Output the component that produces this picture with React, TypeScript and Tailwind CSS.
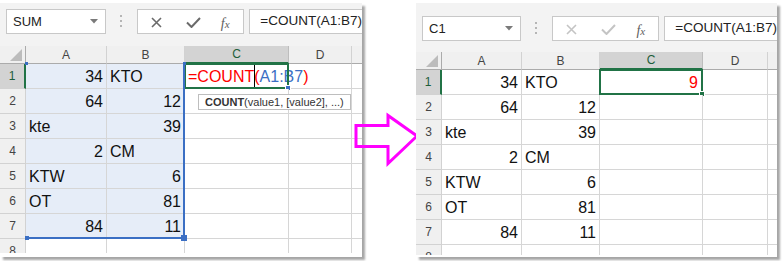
import React from "react";

type Align = "l" | "r";
type Row = [string, Align, string, Align];

const ROWS: Row[] = [
  ["34", "r", "KTO", "l"],
  ["64", "r", "12", "r"],
  ["kte", "l", "39", "r"],
  ["2", "r", "CM", "l"],
  ["KTW", "l", "6", "r"],
  ["OT", "l", "81", "r"],
  ["84", "r", "11", "r"],
];

const cellFont = { fontFamily: '"Liberation Sans", Arial, sans-serif' };

function DownTri() {
  return (
    <svg width="8" height="5" viewBox="0 0 8 5">
      <path d="M0 0h8L4 4.5z" fill="#7a7a7a" />
    </svg>
  );
}

function Dots() {
  return (
    <div className="flex w-[2px] flex-col gap-[3px] pt-[6px]">
      <span className="h-[2px] w-[2px] bg-[#b5b5b5]" />
      <span className="h-[2px] w-[2px] bg-[#b5b5b5]" />
      <span className="h-[2px] w-[2px] bg-[#b5b5b5]" />
    </div>
  );
}

function Toolbar({ name, editing, box }: { name: string; editing: boolean; box: string }) {
  const ic = editing ? "#6a6a6a" : "#c4c4c4";
  return (
    <div className={`flex items-start bg-[#f3f3f3] pl-[6px] ${box}`}>
      <div className="flex h-[25px] w-[101px] items-center justify-between border border-[#c8c8c8] bg-white pl-[6px] pr-[7px]">
        <span className="text-[13px] text-[#222]">{name}</span>
        <DownTri />
      </div>
      <div className="ml-[14px] mr-[15px]">
        <Dots />
      </div>
      <div className="relative h-[25px] w-[109px] border border-[#c8c8c8] bg-white">
        <svg className="absolute left-[13px] top-[7px]" width="11" height="11" viewBox="0 0 11 11">
          <path d="M1 1l9 9M10 1l-9 9" stroke={ic} strokeWidth="1.6" />
        </svg>
        <svg className="absolute left-[48px] top-[7px]" width="15" height="11" viewBox="0 0 15 11">
          <path d="M1 5.5l4.5 4.5L14 1" stroke={ic} strokeWidth="2" fill="none" />
        </svg>
        <span
          className="absolute left-[83px] top-[3px] text-[14px] italic text-[#5e5e5e]"
          style={{ fontFamily: '"Liberation Serif", "Times New Roman", serif' }}
        >
          f<span className="text-[11px]">x</span>
        </span>
      </div>
      <div className="ml-[5px] flex h-[25px] flex-1 items-center border border-r-0 border-[#c8c8c8] bg-white pl-[10px] text-[13.5px] text-[#222]">
        =COUNT(A1:B7)
      </div>
    </div>
  );
}

function Cell({
  text,
  align,
  w,
  sel,
}: {
  text: string;
  align: Align;
  w: string;
  sel: boolean;
}) {
  return (
    <div
      className={`flex h-[25px] shrink-0 items-end border-b border-r border-[#d6d6d6] pb-[2px] text-[16px] leading-[18px] text-[#111] ${w} ${
        align === "r" ? "justify-end pr-[3px]" : "justify-start pl-[3px]"
      } ${sel ? "bg-[#e6edf8]" : "bg-white"}`}
      style={cellFont}
    >
      {text}
    </div>
  );
}

type PanelProps = {
  name: string;
  editing: boolean;
  box: string;
  cols: string[];
  lastRow: string;
  panel: string;
};

function Panel({ name, editing, box, cols, lastRow, panel }: PanelProps) {
  const [wh, wa, wb, wc, wd, we] = cols;
  return (
    <div className={`flex flex-col bg-white ${panel}`}>
      <Toolbar name={name} editing={editing} box={box} />
      {/* column headers */}
      <div className="flex h-[18px] text-[12px] text-[#444]" style={cellFont}>
        <div className={`relative shrink-0 border-b border-r border-[#ababab] bg-[#f0f0f0] ${wh}`}>
          <svg className="absolute bottom-[2px] right-[3px]" width="12" height="12" viewBox="0 0 12 12">
            <path d="M12 0v12H0z" fill="#bcbcbc" />
          </svg>
        </div>
        <div className={`flex shrink-0 items-center justify-center border-b border-r border-b-[#ababab] border-r-[#d2d2d2] bg-[#f0f0f0] ${wa}`}>A</div>
        <div className={`flex shrink-0 items-center justify-center border-b border-r border-b-[#ababab] border-r-[#d2d2d2] bg-[#f0f0f0] ${wb}`}>B</div>
        <div className={`flex shrink-0 items-center justify-center border-b-2 border-r border-b-[#217346] border-r-[#bdbdbd] bg-[#d3d3d3] text-[#1d5e3a] ${wc}`}>C</div>
        <div className={`flex shrink-0 items-center justify-center border-b border-r border-b-[#ababab] border-r-[#d2d2d2] bg-[#f0f0f0] ${wd}`}>D</div>
        <div className={`shrink-0 border-b border-[#ababab] bg-[#f0f0f0] ${we}`} />
      </div>
      {/* rows */}
      <div className="relative">
        {ROWS.map((r, i) => (
          <div key={i} className="flex">
            <div
              className={`flex h-[25px] shrink-0 items-center justify-center border-b text-[12px] ${wh} ${
                i === 0
                  ? "border-r-2 border-b-[#d2d2d2] border-r-[#217346] bg-[#d3d3d3] text-[#1d5e3a]"
                  : "border-r border-[#d2d2d2] bg-[#f0f0f0] text-[#444]"
              }`}
              style={cellFont}
            >
              {i + 1}
            </div>
            <Cell text={r[0]} align={r[1]} w={wa} sel={editing} />
            <Cell text={r[2]} align={r[3]} w={wb} sel={editing} />
            <div
              className={`relative flex h-[25px] shrink-0 items-end border-b border-r border-[#d6d6d6] bg-white pb-[2px] text-[16px] leading-[18px] ${wc} ${
                editing ? "justify-start pl-[3px]" : "justify-end pr-[4px]"
              }`}
              style={cellFont}
            >
              {i === 0 && editing && (
                <span className="whitespace-nowrap">
                  <span className="text-[#ff0000]">=COUNT</span>
                  <span className="relative">
                    <span className="absolute left-0 top-[-4px] h-[24px] w-px bg-black" />
                  </span>
                  <span className="text-[#ff0000]">(</span>
                  <span className="text-[#3b6fc4]">A1:B7</span>
                  <span className="text-[#ff0000]">)</span>
                </span>
              )}
              {i === 0 && !editing && <span className="text-[#ff0000]">9</span>}
              {i === 0 && (
                <div className="absolute -left-px -top-px bottom-[-1px] right-[-1px] border-2 border-[#217346]">
                  <span
                    className={`absolute bottom-[-4px] right-[-4px] h-[6px] w-[6px] border border-white ${
                      editing ? "bg-[#3b6fc4]" : "bg-[#217346]"
                    }`}
                  />
                </div>
              )}
            </div>
            <div className={`h-[25px] shrink-0 border-b border-r border-[#d6d6d6] ${wd}`} />
            <div className={`h-[25px] shrink-0 border-b border-[#d6d6d6] ${we}`} />
          </div>
        ))}
        <div className={`flex overflow-hidden ${lastRow}`}>
          <div className={`flex shrink-0 justify-center overflow-hidden border-r border-[#d2d2d2] bg-[#f0f0f0] pt-[5px] text-[12px] leading-[14px] text-[#444] ${wh}`} style={cellFont}>
            8
          </div>
          <div className={`shrink-0 border-r border-[#d6d6d6] ${wa}`} />
          <div className={`shrink-0 border-r border-[#d6d6d6] ${wb}`} />
          <div className={`shrink-0 border-r border-[#d6d6d6] ${wc}`} />
          <div className={`shrink-0 border-r border-[#d6d6d6] ${wd}`} />
          <div className={`shrink-0 ${we}`} />
        </div>

        {editing && (
          <>
            {/* range highlight A1:B7 */}
            <div className="absolute left-[26px] top-[-1px] h-[176px] w-[159px] border-b-2 border-r-2 border-[#3b6fc4]">
              <span className="absolute left-[-1px] top-[-1px] h-[3px] w-[3px] bg-[#3b6fc4]" />
              <span className="absolute right-[-3px] top-[-1px] h-[3px] w-[3px] bg-[#3b6fc4]" />
              <span className="absolute bottom-[-3px] left-[-1px] h-[4px] w-[4px] bg-[#3b6fc4]" />
              <span className="absolute bottom-[-4px] right-[-4px] h-[6px] w-[6px] bg-[#3b6fc4]" />
            </div>
            {/* function tooltip */}
            <div
              className="absolute left-[198px] top-[30px] flex h-[16px] items-center border border-[#bebebe] bg-white px-[6px] text-[11px] text-[#333]"
              style={cellFont}
            >
              <span className="font-bold">COUNT</span>(value1, [value2], ...)
            </div>
          </>
        )}
      </div>
    </div>
  );
}

export default function App() {
  return (
    <div className="flex h-[261px] w-[782px] items-start bg-white pt-[3px]" style={cellFont}>
      <Panel
        name="SUM"
        editing
        box="h-[43px] pt-[6px]"
        cols={["w-[26px]", "w-[81px]", "w-[78px]", "w-[104px]", "w-[63px]", "w-[10px]"]}
        lastRow="h-[14px]"
        panel="w-[362px] h-[254px] shadow-[3px_3px_2px_rgba(0,0,0,0.35)]"
      />
      <div className="relative h-[200px] w-[54px] shrink-0">
        <svg className="absolute left-[-9px] top-[107px]" width="68" height="54" viewBox="353 107 68 54" overflow="visible">
          <path
            d="M356 122.5H388V112.5L417 133L388 160.5V143.5H356Z"
            fill="none"
            stroke="#ff00ff"
            strokeWidth="3"
            strokeLinejoin="miter"
          />
        </svg>
      </div>
      <Panel
        name="C1"
        editing={false}
        box="h-[49px] pt-[13px]"
        cols={["w-[26px]", "w-[80px]", "w-[78px]", "w-[103px]", "w-[65px]", "w-[9px]"]}
        lastRow="h-[10px]"
        panel="w-[361px] h-[254px] shadow-[3px_3px_2px_rgba(0,0,0,0.35)]"
      />
    </div>
  );
}
